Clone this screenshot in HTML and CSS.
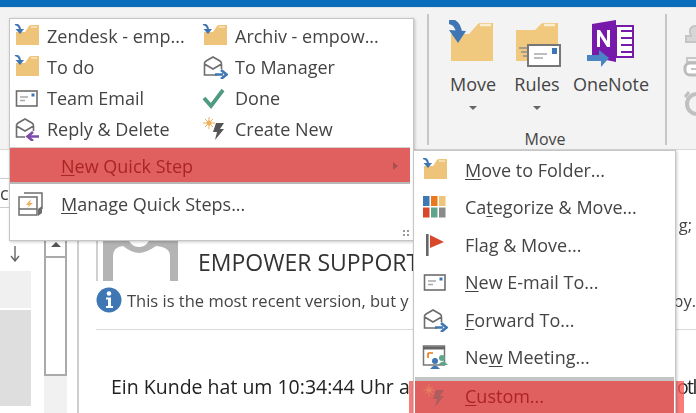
FILE: index.html
```html
<!DOCTYPE html>
<html lang="en">
<head>
<meta charset="utf-8">
<title>Quick Steps</title>
<link rel="stylesheet" href="styles.css">
</head>
<body>
<svg class="defs" width="0" height="0" aria-hidden="true">
  <defs>
    <symbol id="i-folder" viewBox="0 0 26 24">
      <path d="M2 8 L11 8 L15 2 Q16 1 17 1 L25 1 L25 21 L2 21 Z" fill="#eec47a"/>
      <path d="M17 3 L23 3" stroke="#f8e8c8" stroke-width="1.400"/>
      <path d="M1 0 Q6 1 6 6" fill="none" stroke="#3f76b4" stroke-width="2"/>
      <path d="M1.500 5 L6 10 L10 5 Z" fill="#3f76b4"/>
    </symbol>
    <symbol id="i-mail" viewBox="0 0 26 24">
      <rect x="2.500" y="5" width="20.500" height="15" fill="#fff" stroke="#6d6d6d" stroke-width="1.600"/>
      <rect x="17.500" y="7.500" width="3" height="3" fill="#3f76b4"/>
      <path d="M6 11 H14 M6 14.500 H11" stroke="#a9a9a9" stroke-width="1.300"/>
    </symbol>
    <symbol id="i-forward" viewBox="0 0 26 24">
      <path d="M2.500 9 Q2.500 7 4 6 L11 2 L18 6 Q19.500 7 19.500 9 L19.500 14 M15 20 H2.500 V9 L11 14 L19.500 9" fill="none" stroke="#6d6d6d" stroke-width="1.600"/>
      <path d="M13 19.500 H21 M19 15 L24.500 19.500 L19 24" fill="none" stroke="#3f76b4" stroke-width="2.600"/>
    </symbol>
    <symbol id="i-reply" viewBox="0 0 26 24">
      <path d="M2.500 9 Q2.500 7 4 6 L11 2 L18 6 Q19.500 7 19.500 9 L19.500 14 M11 20 H2.500 V9 L11 14 L19.500 9" fill="none" stroke="#6d6d6d" stroke-width="1.600"/>
      <path d="M25 19.500 H15 M19 15 L13.500 19.500 L19 24" fill="none" stroke="#7d4bab" stroke-width="2.600"/>
    </symbol>
    <symbol id="i-check" viewBox="0 0 26 24">
      <path d="M2 12 L9 20 L21 4" fill="none" stroke="#4f9a80" stroke-width="3.800"/>
    </symbol>
    <symbol id="i-bolt" viewBox="0 0 26 24">
      <path d="M14 6 L22 6 L18 12 L22 12 L13 23 L15 15 L11 15 Z" fill="#555"/>
      <circle cx="7" cy="6" r="2.500" fill="#eeb058"/>
      <path d="M7 0 V12 M1 6 H13 M3 2 L11 10 M11 2 L3 10" stroke="#eeb058" stroke-width="1"/>
    </symbol>
    <symbol id="i-grid" viewBox="0 0 26 24">
      <rect x="1" y="1" width="6.500" height="10" fill="#3f76b4"/>
      <rect x="9" y="1" width="6.500" height="10" fill="#e8791c"/>
      <rect x="17" y="1" width="6.500" height="10" fill="#eec47a"/>
      <rect x="1" y="12.500" width="6.500" height="10" fill="#d9482b"/>
      <rect x="9" y="12.500" width="6.500" height="10" fill="#5da58d"/>
      <rect x="17" y="12.500" width="6.500" height="10" fill="#8a8a8a"/>
    </symbol>
    <symbol id="i-flag" viewBox="0 0 26 24">
      <rect x="4" y="1" width="2.600" height="22" fill="#666"/>
      <path d="M8 2 L22 9 L8 15 Z" fill="#d9482b"/>
    </symbol>
    <symbol id="i-meeting" viewBox="0 0 26 24">
      <rect x="1.500" y="1" width="21" height="19" fill="#fff" stroke="#777" stroke-width="1.500"/>
      <path d="M1 3 H23" stroke="#666" stroke-width="3"/>
      <path d="M6 8 H11 M6 8 V13" stroke="#e8791c" stroke-width="1.600" fill="none"/>
      <circle cx="13" cy="16" r="3" fill="#3f76b4"/>
      <path d="M8 24 Q13 17 18 24 Z" fill="#3f76b4"/>
      <circle cx="20" cy="13" r="3" fill="#5da58d"/>
      <path d="M16 20 Q21 13 26 20 Z" fill="#5da58d"/>
    </symbol>
    <symbol id="i-manage" viewBox="0 0 26 24">
      <path d="M7 1 H25 V17" fill="none" stroke="#6d6d6d" stroke-width="1.500"/>
      <rect x="2" y="5" width="18" height="18" fill="#fff" stroke="#6d6d6d" stroke-width="1.500"/>
      <path d="M2 17 H20" stroke="#6d6d6d" stroke-width="1.500"/>
      <path d="M21 17 L25 14 V21 L21 24 Z" fill="#6d6d6d"/>
      <path d="M14 7 L9 13 H12 L10 16 L16 11 H13 Z" fill="#eeb058"/>
    </symbol>
  </defs>
</svg>

<div class="app">
  <div class="titlebar"></div>
  <div class="ribbon">
    <div class="ribbon-lead"></div>
    <div class="ribbon-sep"></div>
    <div class="group">
      <div class="group-items">
        <div class="big-btn btn-move">
          <svg class="big-icon" viewBox="0 0 48 48" width="48" height="48">
            <path d="M2 14 H20 L28 5 Q29 3 31 3 H44 V41 H2 Z" fill="#f0c97f"/>
            <path d="M31 5 H42" stroke="#fbeed2" stroke-width="2.500"/>
            <path d="M0 1 Q10 3 10 14" fill="none" stroke="#3f76b4" stroke-width="6"/>
            <path d="M0 10 L9 23 L17 11 Z" fill="#3f76b4"/>
          </svg>
          <span class="big-label">Move</span>
          <span class="caret"></span>
        </div>
        <div class="big-btn btn-rules">
          <svg class="big-icon" viewBox="0 0 48 48" width="48" height="48">
            <path d="M3 10 H22 L28 4 Q29 3 31 3 H45 V41 H3 Z" fill="#f0c97f"/>
            <path d="M31 5 H42" stroke="#fbeed2" stroke-width="2.500"/>
            <path d="M6 28 H16 M8 32 H16 M10 36 H16" stroke="#8d8d8d" stroke-width="1.500"/>
            <rect x="15" y="25" width="32" height="21" fill="#fff" stroke="#777" stroke-width="2"/>
            <rect x="39" y="28" width="5" height="6" fill="#3f76b4"/>
            <path d="M21 34 H34 M21 38 H30" stroke="#a9a9a9" stroke-width="1.400"/>
          </svg>
          <span class="big-label">Rules</span>
          <span class="caret"></span>
        </div>
        <div class="big-btn btn-onenote">
          <svg class="big-icon" viewBox="0 0 48 48" width="48" height="48">
            <path d="M29 6 H46 V37 H29 Z" fill="#fff" stroke="#7719aa" stroke-width="2"/>
            <path d="M34 11 H46 M34 18 H46 M34 25 H46 M34 32 H46" stroke="#7719aa" stroke-width="1.800"/>
            <path d="M5 4 L29 0 V42 L5 37 Z" fill="#7719aa"/>
            <path d="M10 27 V10 H13 L20 21 V10 H23 V27 H20 L13 16 V27 Z" fill="#fff"/>
            <path d="M0 35 H12 V30 L22 38 L14 47 V41 H0 Z" fill="#4a84c4"/>
          </svg>
          <span class="big-label">OneNote</span>
        </div>
      </div>
      <div class="group-label">Move</div>
    </div>
    <div class="ribbon-sep"></div>
    <div class="ribbon-tail">
      <svg class="ghost" viewBox="0 0 30 20" width="30" height="20"><path d="M3 18 V12 L8 12 Q4 2 14 2 Q24 2 20 12 L27 12 V18 Z" fill="#d6d6d6" stroke="#c4c4c4" stroke-width="2"/></svg>
      <svg class="ghost" viewBox="0 0 30 20" width="30" height="20"><rect x="4" y="1" width="22" height="4" fill="none" stroke="#c8c8c8" stroke-width="2"/><rect x="2" y="6" width="26" height="12" rx="5" fill="#fff" stroke="#bbb" stroke-width="3"/><path d="M8 12 H26" stroke="#c4c4c4" stroke-width="2"/></svg>
      <svg class="ghost" viewBox="0 0 30 26" width="30" height="26"><circle cx="14" cy="14" r="10" fill="none" stroke="#c0c0c0" stroke-width="4"/><path d="M6 2 L2 7 M20 1 L24 6" stroke="#c0c0c0" stroke-width="3"/></svg>
    </div>
  </div>

  <div class="content">
    <div class="list-pane">
      <div class="search-box">c</div>
      <svg class="sort-arrow" viewBox="0 0 10 16" width="10" height="16">
        <path d="M5 0 V14 M1 10 L5 15 L9 10" fill="none" stroke="#666" stroke-width="1.400"/>
      </svg>
      <div class="list-item light"></div>
      <div class="list-item dark"></div>
    </div>
    <div class="scrollbar">
      <div class="scroll-up"><i class="scroll-tri"></i></div>
      <div class="scroll-thumb"></div>
    </div>
    <div class="reading">
      <div class="msg-top">g;</div>
      <div class="msg-head">
        <svg class="avatar" viewBox="0 0 82 47" width="82" height="47">
          <rect x="0" width="2" height="47" fill="#d0d0d0"/>
          <rect x="7" width="75" height="47" fill="#b4b4b4"/>
          <circle cx="43" cy="2" r="11" fill="#fff"/>
          <path d="M17 47 V22 Q17 13 27 12 Q36 19 43 19 Q50 19 60 12 Q74 13 74 22 V47 Z" fill="#fff"/>
        </svg>
        <div class="sender">EMPOWER SUPPORT</div>
      </div>
      <div class="info-row">
        <svg class="info-icon" viewBox="0 0 26 26" width="26" height="26">
          <circle cx="13" cy="13" r="12.500" fill="#3f76b4"/>
          <circle cx="13" cy="6.500" r="2.300" fill="#fff"/>
          <path d="M10 10.500 H15 V19 H17 V21 H10 V19 H12 V12.500 H10 Z" fill="#fff"/>
        </svg>
        <span class="info-text">This is the most recent version, but y</span>
        <span class="info-end">py.</span>
      </div>
      <div class="msg-rule"></div>
      <p class="msg-body"><span>Ein Kunde hat um 10:34:44 Uhr a</span><span class="body-end">otl</span></p>
    </div>
  </div>

  <div class="menu quick-menu">
    <div class="step-grid">
      <div class="step"><svg class="ico"><use href="#i-folder"/></svg><span>Zendesk - emp...</span></div>
      <div class="step"><svg class="ico"><use href="#i-folder"/></svg><span>Archiv - empow...</span></div>
      <div class="step"><svg class="ico"><use href="#i-folder"/></svg><span>To do</span></div>
      <div class="step"><svg class="ico"><use href="#i-forward"/></svg><span>To Manager</span></div>
      <div class="step"><svg class="ico"><use href="#i-mail"/></svg><span>Team Email</span></div>
      <div class="step"><svg class="ico"><use href="#i-check"/></svg><span>Done</span></div>
      <div class="step"><svg class="ico"><use href="#i-reply"/></svg><span>Reply &amp; Delete</span></div>
      <div class="step"><svg class="ico"><use href="#i-bolt"/></svg><span>Create New</span></div>
    </div>
    <div class="new-step"><span><u>N</u>ew Quick Step</span><i class="sub-arrow"></i></div>
    <div class="manage"><svg class="ico"><use href="#i-manage"/></svg><span><u>M</u>anage Quick Steps...</span></div>
    <div class="grip"></div>
  </div>

  <div class="custom-glow"></div>
  <div class="menu sub-menu">
    <div class="sub-item"><svg class="ico"><use href="#i-folder"/></svg><span><u>M</u>ove to Folder...</span></div>
    <div class="sub-item"><svg class="ico"><use href="#i-grid"/></svg><span>Ca<u>t</u>egorize &amp; Move...</span></div>
    <div class="sub-item"><svg class="ico"><use href="#i-flag"/></svg><span>Fla<u>g</u> &amp; Move...</span></div>
    <div class="sub-item"><svg class="ico"><use href="#i-mail"/></svg><span><u>N</u>ew E-mail To...</span></div>
    <div class="sub-item"><svg class="ico"><use href="#i-forward"/></svg><span><u>F</u>orward To...</span></div>
    <div class="sub-item"><svg class="ico"><use href="#i-meeting"/></svg><span>Ne<u>w</u> Meeting...</span></div>
    <div class="sub-item custom"><svg class="ico"><use href="#i-bolt"/></svg><span><u>C</u>ustom...</span></div>
  </div>
</div>
</body>
</html>
```
FILE: styles.css
```css
* { box-sizing: border-box; }
html, body { margin: 0; padding: 0; }
body { width: 696px; height: 413px; overflow: hidden; background: #fff; font-family: "Open Sans", "Noto Sans", sans-serif; color: #444; }
.defs { position: absolute; }
.app { position: relative; width: 696px; height: 413px; overflow: hidden; filter: blur(0.35px); }

.titlebar { height: 7px; background: #0b6ebd; }

.ribbon { height: 143px; background: #f3f3f3; border-top: 1px solid #e6e6e6; border-bottom: 1px solid #d8d8d8; display: flex; padding: 6px 0 0; }
.ribbon-lead { width: 413px; flex: none; margin-right: 14px; }
.ribbon-sep { width: 2px; flex: none; background: #c6c6c6; margin-bottom: 4px; }
.group { width: 236px; flex: none; display: flex; flex-direction: column; }
.group-items { display: flex; flex: 1; padding-top: 6px; }
.big-btn { display: flex; flex-direction: column; align-items: center; flex: none; }
.btn-move { width: 72px; margin-left: 8px; }
.btn-rules { width: 56px; }
.btn-onenote { width: 92px; }
.big-icon { flex: none; display: block; }
.big-label { font-size: 18px; line-height: 24px; margin-top: 4px; color: #444; }
.caret { margin-top: 10px; width: 0; height: 0; border-left: 4px solid transparent; border-right: 4px solid transparent; border-top: 4px solid #666; }
.group-label { text-align: center; font-size: 16px; line-height: 20px; color: #444; padding-right: 4px; }
.ribbon-tail { flex: 1; min-width: 0; display: flex; flex-direction: column; gap: 13px; padding: 10px 0 0 16px; }
.ghost { flex: none; display: block; }

.content { display: flex; height: 263px; }
.list-pane { width: 44px; flex: none; padding-top: 28px; }
.search-box { height: 30px; border-top: 1px solid #ccc; border-bottom: 1px solid #ccc; font-size: 18px; line-height: 28px; width: 9px; overflow: hidden; color: #444; }
.sort-arrow { display: block; margin: 38px 0 0 10px; }
.list-item { width: 31px; }
.list-item.light { height: 37px; background: #f0f0f0; margin: 9px 0 2px; }
.list-item.dark { height: 96px; background: #dedede; }
.scrollbar { width: 23px; flex: none; background: #f1f1f1; margin-right: 10px; }
.scroll-up { height: 108px; background: #fff; border: 2px solid #aaa; border-top: 0; display: flex; justify-content: center; align-items: flex-end; padding-bottom: 9px; }
.scroll-tri { width: 0; height: 0; border-left: 5px solid transparent; border-right: 5px solid transparent; border-bottom: 5px solid #555; }
.scroll-thumb { height: 118px; background: #fff; border: 2px solid #aaa; border-top: 0; }
.reading { flex: 1; min-width: 0; border-left: 2px solid #cfcfcf; padding: 66px 0 0 17px; overflow: hidden; }
.msg-top { height: 18px; line-height: 18px; font-size: 16.500px; text-align: right; padding-right: 4px; color: #444; }
.msg-head { display: flex; align-items: flex-end; gap: 20px; height: 47px; white-space: nowrap; }
.avatar { flex: none; display: block; }
.sender { font-size: 23px; line-height: 30px; color: #333; margin-bottom: 4px; }
.info-row { display: flex; align-items: center; gap: 5px; height: 34px; margin-top: 2px; white-space: nowrap; }
.info-icon { flex: none; }
.info-text { font-size: 16.500px; color: #444; }
.info-end { font-size: 16.500px; color: #444; margin-left: auto; }
.msg-rule { height: 1px; background: #d9d9d9; margin-top: 12px; }
.msg-body { display: flex; justify-content: space-between; margin: 45px 0 0 15px; font-size: 19.500px; line-height: 24px; color: #222; white-space: nowrap; }
.body-end { letter-spacing: -1.500px; }

.menu { position: absolute; background: #fff; border: 1px solid #c6c6c6; box-shadow: 1px 1px 3px rgba(0,0,0,0.22); font-size: 18px; color: #444; }
.menu span { white-space: nowrap; }
.ico { width: 26px; height: 24px; flex: none; display: block; }
u { text-underline-offset: 2px; }

.quick-menu { left: 9px; top: 18px; width: 405px; height: 223px; }
.step-grid { display: grid; grid-template-columns: 188px 1fr; grid-auto-rows: 31px; padding: 1px 0 0 4px; height: 128px; }
.step { display: flex; align-items: center; gap: 7px; }
.new-step { height: 37px; margin-right: 3px; background: #e06060; color: #ac2424; border-top: 1px solid #d0d0d0; border-bottom: 2px solid #b8b8b8; padding: 1px 12px 0 51px; display: flex; align-items: center; justify-content: space-between; }
.sub-arrow { width: 0; height: 0; border-top: 4px solid transparent; border-bottom: 4px solid transparent; border-left: 5px solid #a85050; }
.manage { height: 38px; margin-top: 1px; display: flex; align-items: center; gap: 18px; padding-left: 7px; }
.grip { position: absolute; right: 3px; bottom: 3px; width: 8px; height: 8px; background: radial-gradient(circle, #999 1px, transparent 1.500px) 0 0 / 4px 4px; }

.sub-menu { left: 413px; top: 150px; width: 263px; height: 270px; }
.sub-item { height: 37.500px; display: flex; align-items: center; gap: 17px; padding-left: 8px; }
.sub-item.custom { background: #e06060; color: #ac2424; border-top: 4px solid #c4c4c4; margin: 1px 1px 0; padding: 3px 0 0 7px; height: 45px; align-items: flex-start; }
.custom .ico { opacity: 0.35; }
.custom-glow { position: absolute; left: 409px; top: 381px; width: 275px; height: 32px; background: rgba(248,90,90,0.8); }
```
